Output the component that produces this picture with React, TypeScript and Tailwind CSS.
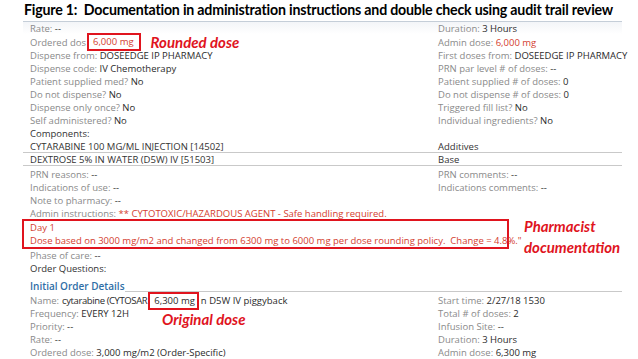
const body = { fontFamily: '"Open Sans", "Noto Sans", sans-serif' };
const calibri = { fontFamily: 'Lato, "Open Sans", sans-serif' };

type Cell = { label?: string; value?: string; red?: boolean; plain?: string };

function Field({ cell }: { cell?: Cell }) {
  if (!cell) return <span />;
  if (cell.plain) return <span className="text-[#333]">{cell.plain}</span>;
  return (
    <span className="whitespace-nowrap">
      <span className="text-[#8a8a8a]">{cell.label}</span>{" "}
      <span className={cell.red ? "text-[#d4402f]" : "text-[#2b2b2b]"}>{cell.value}</span>
    </span>
  );
}

function Row({ left, right, line }: { left?: Cell; right?: Cell; line?: boolean }) {
  return (
    <div
      className={
        "grid h-[13px] grid-cols-[415px_1fr] grid-rows-[13px] items-center leading-[13px] " +
        (line ? "border-b border-[#c9c9c9]" : "")
      }
    >
      <div className="pl-[7px]">
        <Field cell={left} />
      </div>
      <div>
        <Field cell={right} />
      </div>
    </div>
  );
}

export default function App() {
  return (
    <div className="relative h-[359px] w-[638px] overflow-hidden bg-white" style={body}>
      <div className="ml-[24px] pt-[1px]">
        <h1
          className="whitespace-nowrap text-[14.2px] font-bold leading-[17px] tracking-[-0.2px] text-black"
          style={calibri}
        >
          Figure 1:&nbsp; Documentation in administration instructions and double check using audit trail review
        </h1>
      </div>

      <div className="ml-[23px] mr-[16px] mt-[3px] border-t border-[#c5ced8] bg-gradient-to-b from-[#f3f5f8] to-white to-[12px] text-[9.5px]">
        <Row left={{ label: "Rate:", value: "--" }} right={{ label: "Duration:", value: "3 Hours" }} />
        <div className="grid h-[14px] grid-cols-[415px_1fr] grid-rows-[14px] items-center leading-[13px]">
          <div className="flex items-center whitespace-nowrap pl-[7px]">
            <span className="text-[#8a8a8a]">Ordered dos</span>
            <span className="relative ml-[1px] inline-block border-2 border-[#e0141e] bg-white pl-[4px] pr-[5px] leading-[14px] text-[#d4402f]">
              6,000 mg
            </span>
            <span className="ml-[10px] text-[15px] font-bold italic leading-[14px] text-[#e0141e]" style={calibri}>
              Rounded dose
            </span>
          </div>
          <div>
            <Field cell={{ label: "Admin dose:", value: "6,000 mg", red: true }} />
          </div>
        </div>
        <Row
          left={{ label: "Dispense from:", value: "DOSEEDGE IP PHARMACY" }}
          right={{ label: "First doses from:", value: "DOSEEDGE IP PHARMACY" }}
        />
        <Row
          left={{ label: "Dispense code:", value: "IV Chemotherapy" }}
          right={{ label: "PRN par level # of doses:", value: "--" }}
        />
        <Row
          left={{ label: "Patient supplied med?", value: "No" }}
          right={{ label: "Patient supplied # of doses:", value: "0" }}
        />
        <Row
          left={{ label: "Do not dispense?", value: "No" }}
          right={{ label: "Do not dispense # of doses:", value: "0" }}
        />
        <Row
          left={{ label: "Dispense only once?", value: "No" }}
          right={{ label: "Triggered fill list?", value: "No" }}
        />
        <Row
          left={{ label: "Self administered?", value: "No" }}
          right={{ label: "Individual ingredients?", value: "No" }}
        />
        <Row left={{ plain: "Components:" }} />
        <Row left={{ plain: "CYTARABINE 100 MG/ML INJECTION [14502]" }} right={{ plain: "Additives" }} line />
        <Row left={{ plain: "DEXTROSE 5% IN WATER (D5W) IV [51503]" }} right={{ plain: "Base" }} line />
        <div className="h-[2px]" />
        <Row left={{ label: "PRN reasons:", value: "--" }} right={{ label: "PRN comments:", value: "--" }} />
        <Row
          left={{ label: "Indications of use:", value: "--" }}
          right={{ label: "Indications comments:", value: "--" }}
        />
        <Row left={{ label: "Note to pharmacy:", value: "--" }} />
        <Row
          left={{
            label: "Admin instructions:",
            value: "** CYTOTOXIC/HAZARDOUS AGENT - Safe handling required.",
            red: true,
          }}
        />

        <div className="relative -mt-[1px]">
          <div className="-ml-[1px] w-[487px] border-2 border-[#e0141e] pl-[6px] leading-[13px] text-[#d4402f]">
            <div>Day 1</div>
            <div className="whitespace-nowrap">
              Dose based on 3000 mg/m2 and changed from 6300 mg to 6000 mg per dose rounding policy.&nbsp; Change = 4.8%.&quot;
            </div>
          </div>
          <div
            className="absolute left-[501px] top-[-3px] text-[15px] font-bold italic leading-[21px] text-[#e0141e]"
            style={calibri}
          >
            Pharmacist
            <br />
            documentation
          </div>
        </div>

        <Row left={{ label: "Phase of care:", value: "--" }} />
        <Row left={{ plain: "Order Questions:" }} />

        <div className="mt-[4px] flex items-end">
          <span className="pl-[7px] text-[10px] font-semibold leading-[15px] text-[#2f6ea6]">
            Initial Order Details
          </span>
          <span className="mb-[2px] flex-1 border-b border-[#c9c9c9]" />
        </div>

        <div className="relative grid h-[13px] grid-cols-[415px_1fr] grid-rows-[13px] items-center leading-[13px]">
          <div className="flex items-center whitespace-nowrap pl-[7px]">
            <span className="text-[#8a8a8a]">Name:</span>
            <span className="ml-[3px] tracking-[-0.4px] text-[#2b2b2b]">cytarabine (CYTOSAR</span>
            <span className="relative ml-[1px] inline-block border-2 border-[#e0141e] bg-white pl-[4px] pr-[2px] leading-[14px] text-[#2b2b2b]">
              6,300 mg
            </span>
            <span className="ml-[2px] text-[#2b2b2b]">n D5W IV piggyback</span>
          </div>
          <div>
            <Field cell={{ label: "Start time:", value: "2/27/18 1530" }} />
          </div>
          <span
            className="absolute left-[139px] top-[17px] text-[15px] font-bold italic leading-[16px] text-[#e0141e]"
            style={calibri}
          >
            Original dose
          </span>
        </div>
        <Row left={{ label: "Frequency:", value: "EVERY 12H" }} right={{ label: "Total # of doses:", value: "2" }} />
        <Row left={{ label: "Priority:", value: "--" }} right={{ label: "Infusion Site:", value: "--" }} />
        <Row left={{ label: "Rate:", value: "--" }} right={{ label: "Duration:", value: "3 Hours" }} />
        <Row
          left={{ label: "Ordered dose:", value: "3,000 mg/m2 (Order-Specific)" }}
          right={{ label: "Admin dose:", value: "6,300 mg" }}
        />
      </div>
    </div>
  );
}
